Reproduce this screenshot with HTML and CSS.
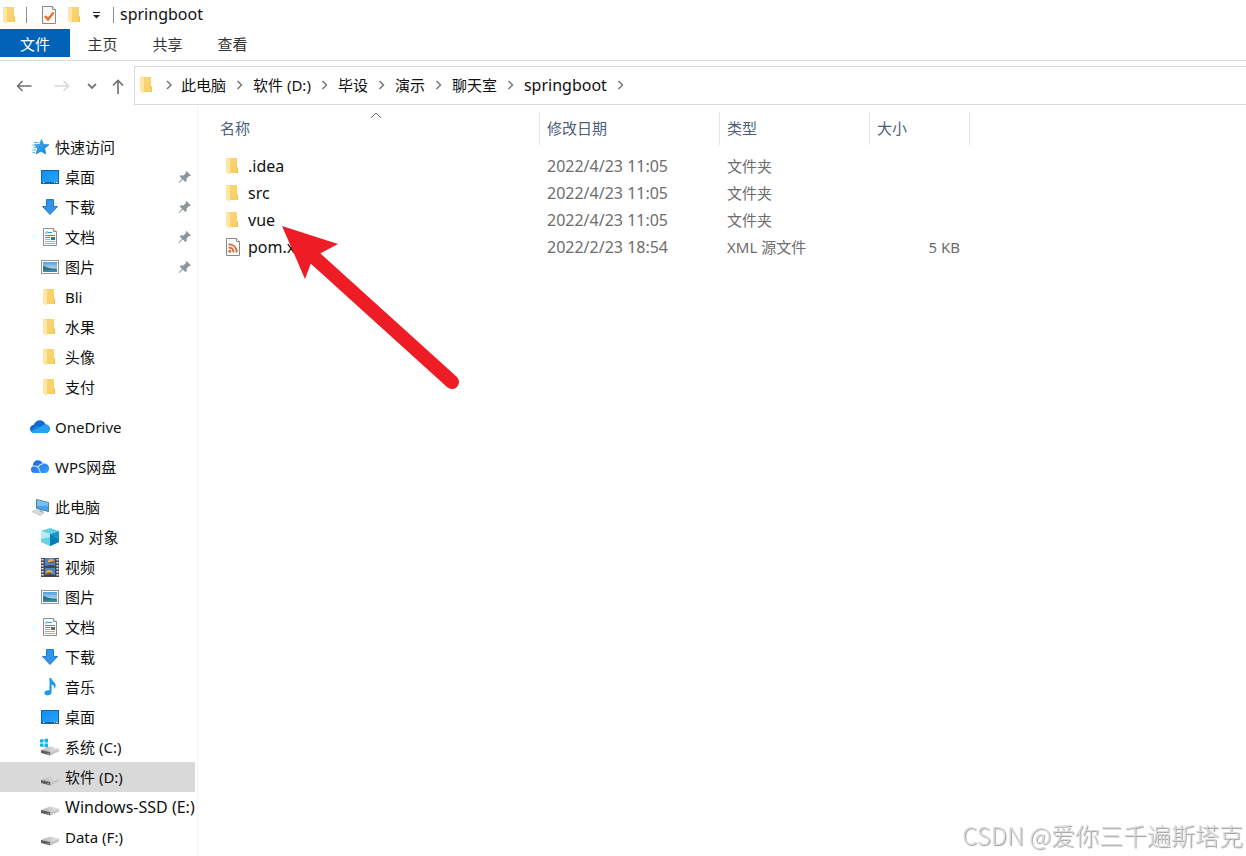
FILE: index.html
```html
<!DOCTYPE html>
<html lang="zh-CN">
<head>
<meta charset="utf-8">
<title>springboot</title>
<link rel="stylesheet" href="styles.css">
</head>
<body>
<svg class="defs" aria-hidden="true">
  <defs>
    <linearGradient id="g-fold" x1="0" y1="0" x2="1" y2="1"><stop offset="0" stop-color="#fbd67c"/><stop offset="1" stop-color="#f9cd62"/></linearGradient>
    <linearGradient id="g-desk" x1="0" y1="0" x2="1" y2="1"><stop offset="0" stop-color="#0f8df0"/><stop offset="1" stop-color="#2aa5ff"/></linearGradient>
    <linearGradient id="g-star" x1="0" y1="0" x2="1" y2="1"><stop offset="0" stop-color="#49b9f5"/><stop offset="1" stop-color="#0c7ed6"/></linearGradient>
    <linearGradient id="g-sky" x1="0" y1="0" x2="0" y2="1"><stop offset="0" stop-color="#4e9fe0"/><stop offset="1" stop-color="#e4f3f8"/></linearGradient>
    <linearGradient id="g-wps" x1="0" y1="0" x2="1" y2="1"><stop offset="0" stop-color="#1563ee"/><stop offset="1" stop-color="#3aa2ff"/></linearGradient>
    <linearGradient id="g-drive" x1="0" y1="0" x2="1" y2="0"><stop offset="0" stop-color="#b4b4b4"/><stop offset="1" stop-color="#e8e8e8"/></linearGradient>
  </defs>
  <symbol id="folder" viewBox="0 0 20 20">
    <path d="M3 2h11v9l1 1v5H6L3 16z" fill="url(#g-fold)"/>
    <path d="M3 2l4 1v14l-1 2-3-3z" fill="#fde6a6"/>
    <path d="M14 11l1 1v5h-1z" fill="#efc050"/>
  </symbol>
  <symbol id="check" viewBox="0 0 20 20">
    <path d="M3.500 1.500h10l3 3v14h-13z" fill="#f7f8fa" stroke="#87898e"/>
    <path d="M13.500 1.500v3h3" fill="#fff" stroke="#87898e"/>
    <path d="M6 11l3 3.500 5.500-7" fill="none" stroke="#f06a24" stroke-width="2.200"/>
  </symbol>
  <symbol id="star" viewBox="0 0 20 20">
    <path d="M11.500 2.500l2.100 5 5.400.2-4.300 3.800 1 5.500-4.700-2.700-5 2.700 1.500-5.500L4.600 7.700l5-.2z" fill="url(#g-star)" stroke="#0e78c4" stroke-width=".6"/>
    <path d="M4 5.500h5M2.500 8h3.500M3.500 10.500h3M2 13h4M2.500 15.500h2.500" stroke="#55b5ee"/>
  </symbol>
  <symbol id="desktop" viewBox="0 0 20 20">
    <rect x="1.500" y="3.500" width="17" height="13" fill="url(#g-desk)" stroke="#0a68b8"/>
    <path d="M2 15.500h16" stroke="#0b63ac"/><path d="M3 15.500h1.500M14 15.500h1M16 15.500h1.500" stroke="#d8efff"/>
  </symbol>
  <symbol id="download" viewBox="0 0 20 20">
    <path d="M6.500 2.500h7v7h4L10 17.500 2.500 9.500h4z" fill="#3393e6" stroke="#2579c6"/>
  </symbol>
  <symbol id="doc" viewBox="0 0 20 20">
    <path d="M3.500 1.500h10l3 3v14h-13z" fill="#fbfcfc" stroke="#8b8f92"/>
    <path d="M13.500 1.500v3h3" fill="#fff" stroke="#8b8f92"/>
    <path d="M8 5.500h4M5 8.500h10M5 10.500h5" stroke="#2c9bd6"/><path d="M5 6.500l2-2v2" fill="none" stroke="#2c9bd6"/>
    <path d="M5 12.500h5M5 14.500h10M5 16.500h10" stroke="#a5b1b8"/>
    <rect x="11" y="10" width="4" height="3" fill="#2e7c9c"/>
  </symbol>
  <symbol id="picture" viewBox="0 0 20 20">
    <rect x="1.500" y="3.500" width="17" height="13" fill="#fff" stroke="#92979b"/>
    <rect x="3" y="5" width="14" height="10" fill="url(#g-sky)"/>
    <path d="M3 9c3 0 4 2 7 2 3 1 5 0 7 1v3H3z" fill="#367478"/><path d="M3 13.500c5-.5 9-1 14-.5v2H3z" fill="#3e84ad"/>
  </symbol>
  <symbol id="onedrive" viewBox="0 0 20 20">
    <path d="M4.500 16C2 16 0 14.300 0 12s1.700-4 3.800-4.200C5 4.800 7.200 3.200 9.700 3.200c2.900 0 5 1.700 5.800 4.200 2.600 0 4.500 2 4.500 4.400S18 16 15.800 16z" fill="#0a6cce"/>
    <path d="M7 8.200l9 5.800-11.500 2C3 16 1.500 15.300.7 14z" fill="#1583df"/>
    <path d="M15.300 7.400c2.700 0 4.700 2 4.700 4.400S18 16 15.800 16H4.500c-1.500 0-2.700-.6-3.500-1.600L11.500 9.300c1-1.200 2.300-1.900 3.800-1.900z" fill="#27a2ee"/>
  </symbol>
  <symbol id="wps" viewBox="0 0 20 20">
    <path d="M4.500 16C2.300 16 1 14.500 1 12.500 1 11 1.700 9.800 3 9.200 2.500 6 4.800 3.300 8 3.300c2.400 0 4.200 1.300 5 3.400 3.300-.7 6.200 1.600 6.200 4.800 0 2.700-2 4.500-4.700 4.500z" fill="url(#g-wps)"/>
    <path d="M3 9.200c3.700-.8 6.600 1.500 7.500 6.800M7.500 10.700c1-2.200 3-3.600 5.500-4" fill="none" stroke="#d4e8ff" stroke-width="1.100"/>
  </symbol>
  <symbol id="pc" viewBox="0 0 20 20">
    <path d="M6.500 2.500l12 3v9l-12-3z" fill="#3ea2ee" stroke="#5e7f99"/>
    <path d="M7 3l11 2.800v3L7 9z" fill="#78c0f4"/>
    <path d="M10 13l3 1v2l-4-1z" fill="#9fa7ad"/><path d="M2 14.500l4-1.500 8 3-4 2.500z" fill="#d8dcdf" stroke="#b1b6ba" stroke-width=".6"/>
  </symbol>
  <symbol id="cube" viewBox="0 0 20 20">
    <path d="M10 1l9 3-9 3-9-3z" fill="#5fd0e7"/><path d="M1 4l9 3v12l-9-4z" fill="#b4eaf3"/><path d="M19 4l-9 3v12l9-4z" fill="#1798c8"/><path d="M1 12l9-2v9l-9-4z" fill="#67d1e2"/><path d="M10 7l9 6v2l-9 4z" fill="#087fb7"/>
  </symbol>
  <symbol id="video" viewBox="0 0 20 20">
    <rect x="1" y="1" width="18" height="19" fill="#44474d"/><path d="M2.500 2v17M17.500 2v17" stroke="#edf0f1" stroke-width="2" stroke-dasharray="1.500 1.500"/>
    <rect x="5" y="1" width="10" height="9" fill="#4e82cf"/><rect x="5" y="11" width="10" height="8" fill="#4e82cf"/>
    <path d="M11 2c2 0 2.500 1 3 3H8c0-2 1-3 3-3zM9 13c2 0 3 1 4 3H6c0-2 1-3 3-3z" fill="#e8b72c"/><path d="M9 5l5-1v2H9zM6 16l5-1v2H6z" fill="#a44c2b"/><path d="M5 9l6-1 4 1v1H5zM5 18l5-1 5 1v1H5z" fill="#304b31"/>
  </symbol>
  <symbol id="music" viewBox="0 0 20 20">
    <path d="M9.500 1h1.800c.3 3 4.300 4 4.300 7.500 0 1.500-.6 2.500-1.300 3.500.2-2.500-.8-4-2.700-4.500V15c0 2-1.700 3.300-3.900 3.300-1.900 0-3.200-.8-3.200-2.300 0-1.900 2.200-3 5-2.600z" fill="#139cec"/>
  </symbol>
  <symbol id="drive" viewBox="0 0 20 20">
    <path d="M1 13l9-3.500 9 2-8.500 3.500z" fill="url(#g-drive)"/><path d="M1 13l9.500 2v3.500L1 16z" fill="#5f5f5f"/><path d="M19 11.500L10.500 15v3.500l8.500-4z" fill="#c7c7c7"/><path d="M7.500 16.500l1.500.4" stroke="#b9c9bc"/>
  </symbol>
  <symbol id="windrive" viewBox="0 0 20 20">
    <use href="#drive"/>
    <path d="M0 2.500l3.500-.5v3.500H0zM4.500 2L8 1.500v4H4.500zM0 6.500h3.500V10L0 9.500zM4.500 6.500H8v4L4.500 10z" fill="#17b0ee"/>
  </symbol>
  <symbol id="pin" viewBox="0 0 14 14">
    <path d="M8.500 1L13 5.500l-1.200.8-.8-.3-2.400 2.500.1 2.500-1.300 1L4.700 9.400 1.300 12.900l-.7-.5L4 8.700 1.700 6.400l1-1.200 2.700.2L8 3l-.3-1z" fill="#8b979d"/>
  </symbol>
  <symbol id="xml" viewBox="0 0 20 20">
    <path d="M3.500 1.500h10l3 3v14h-13z" fill="#f8f9fb" stroke="#84888e"/><path d="M13.500 1.500v3h3" fill="#fff" stroke="#84888e"/>
    <circle cx="6.800" cy="14.300" r="1.500" fill="#d4763a"/><path d="M5.500 10.500c3 0 5 2 5 5M5.500 7.200c5 0 8.300 3.300 8.300 8.300" fill="none" stroke="#d4763a" stroke-width="2"/>
  </symbol>
  <symbol id="sep" viewBox="0 0 8 10"><path d="M2 1l4 4-4 4" fill="none" stroke="#777" stroke-width="1.500"/></symbol>
</svg>

<header class="titlebar">
  <svg class="icon"><use href="#folder"/></svg>
  <span class="rule"></span>
  <button class="quick first" aria-label="属性"><svg class="icon"><use href="#check"/></svg></button>
  <button class="quick" aria-label="新建文件夹"><svg class="icon"><use href="#folder"/></svg></button>
  <button class="quick" aria-label="自定义快速访问工具栏"><svg class="more" viewBox="0 0 11 8"><path d="M2 1.500h7" stroke="#222"/><path d="M2 4h7L5.500 7.500z" fill="#222"/></svg></button>
  <span class="rule last"></span>
  <h1 class="title">springboot</h1>
</header>

<nav class="tabs">
  <button class="tab file">文件</button>
  <button class="tab">主页</button>
  <button class="tab">共享</button>
  <button class="tab">查看</button>
</nav>

<div class="location">
  <div class="history">
    <button aria-label="后退"><svg width="16" height="14" viewBox="0 0 16 14"><path d="M15.500 7H1.500M6.500 2L1.500 7l5 5" fill="none" stroke="#6f6f6f" stroke-width="1.500"/></svg></button>
    <button aria-label="前进" disabled><svg width="16" height="14" viewBox="0 0 16 14"><path d="M.5 7h14M9.500 2l5 5-5 5" fill="none" stroke="#d8d8d8" stroke-width="1.500"/></svg></button>
    <button class="recent" aria-label="最近浏览的位置"><svg width="10" height="8" viewBox="0 0 10 8"><path d="M1 2l4 4 4-4" fill="none" stroke="#777" stroke-width="1.800"/></svg></button>
    <button class="up" aria-label="上移"><svg width="14" height="16" viewBox="0 0 14 16"><path d="M7 16V2.500M2 7.500l5-5 5 5" fill="none" stroke="#6f6f6f" stroke-width="1.600"/></svg></button>
  </div>
  <nav class="crumbs">
    <svg class="icon"><use href="#folder"/></svg>
    <svg class="sep"><use href="#sep"/></svg><a href="#">此电脑</a>
    <svg class="sep"><use href="#sep"/></svg><a href="#">软件 (D:)</a>
    <svg class="sep"><use href="#sep"/></svg><a href="#">毕设</a>
    <svg class="sep"><use href="#sep"/></svg><a href="#">演示</a>
    <svg class="sep"><use href="#sep"/></svg><a href="#">聊天室</a>
    <svg class="sep"><use href="#sep"/></svg><a class="latin" href="#">springboot</a>
    <svg class="sep"><use href="#sep"/></svg>
  </nav>
</div>

<div class="body">
  <nav class="sidebar">
    <div class="group">
      <a class="node root" href="#"><svg class="icon"><use href="#star"/></svg>快速访问</a>
      <a class="node" href="#"><svg class="icon"><use href="#desktop"/></svg>桌面<svg class="pin"><use href="#pin"/></svg></a>
      <a class="node" href="#"><svg class="icon"><use href="#download"/></svg>下载<svg class="pin"><use href="#pin"/></svg></a>
      <a class="node" href="#"><svg class="icon"><use href="#doc"/></svg>文档<svg class="pin"><use href="#pin"/></svg></a>
      <a class="node" href="#"><svg class="icon"><use href="#picture"/></svg>图片<svg class="pin"><use href="#pin"/></svg></a>
      <a class="node" href="#"><svg class="icon"><use href="#folder"/></svg>Bli</a>
      <a class="node" href="#"><svg class="icon"><use href="#folder"/></svg>水果</a>
      <a class="node" href="#"><svg class="icon"><use href="#folder"/></svg>头像</a>
      <a class="node" href="#"><svg class="icon"><use href="#folder"/></svg>支付</a>
    </div>
    <div class="group"><a class="node root" href="#"><svg class="icon"><use href="#onedrive"/></svg>OneDrive</a></div>
    <div class="group"><a class="node root" href="#"><svg class="icon"><use href="#wps"/></svg>WPS网盘</a></div>
    <div class="group">
      <a class="node root" href="#"><svg class="icon"><use href="#pc"/></svg>此电脑</a>
      <a class="node" href="#"><svg class="icon"><use href="#cube"/></svg>3D 对象</a>
      <a class="node" href="#"><svg class="icon"><use href="#video"/></svg>视频</a>
      <a class="node" href="#"><svg class="icon"><use href="#picture"/></svg>图片</a>
      <a class="node" href="#"><svg class="icon"><use href="#doc"/></svg>文档</a>
      <a class="node" href="#"><svg class="icon"><use href="#download"/></svg>下载</a>
      <a class="node" href="#"><svg class="icon"><use href="#music"/></svg>音乐</a>
      <a class="node" href="#"><svg class="icon"><use href="#desktop"/></svg>桌面</a>
      <a class="node" href="#"><svg class="icon"><use href="#windrive"/></svg>系统 (C:)</a>
      <a class="node selected" href="#"><svg class="icon"><use href="#drive"/></svg>软件 (D:)</a>
      <a class="node latin" href="#"><svg class="icon"><use href="#drive"/></svg>Windows-SSD (E:)</a>
      <a class="node" href="#"><svg class="icon"><use href="#drive"/></svg>Data (F:)</a>
    </div>
  </nav>

  <main class="content">
    <table class="files">
      <colgroup><col class="c-name"><col class="c-date"><col class="c-type"><col class="c-size"></colgroup>
      <thead>
        <tr>
          <th><div class="head">名称<svg class="sort" viewBox="0 0 12 7"><path d="M1 6l5-5 5 5" fill="none" stroke="#666"/></svg></div></th>
          <th><div class="head">修改日期</div></th>
          <th><div class="head">类型</div></th>
          <th><div class="head">大小</div></th>
        </tr>
      </thead>
      <tbody>
        <tr><td><div class="name latin"><svg class="icon"><use href="#folder"/></svg>.idea</div></td><td class="latin">2022/4/23 11:05</td><td>文件夹</td><td></td></tr>
        <tr><td><div class="name latin"><svg class="icon"><use href="#folder"/></svg>src</div></td><td class="latin">2022/4/23 11:05</td><td>文件夹</td><td></td></tr>
        <tr><td><div class="name latin"><svg class="icon"><use href="#folder"/></svg>vue</div></td><td class="latin">2022/4/23 11:05</td><td>文件夹</td><td></td></tr>
        <tr><td><div class="name latin"><svg class="icon"><use href="#xml"/></svg>pom.xml</div></td><td class="latin">2022/2/23 18:54</td><td>XML 源文件</td><td class="size">5 KB</td></tr>
      </tbody>
    </table>
    <svg class="pointer" viewBox="0 0 180 166" aria-hidden="true">
      <path d="M33 32L170 156" stroke="#ee1c25" stroke-width="14" stroke-linecap="round"/>
      <path d="M0 0l56 18-17 9-10 10-6 16z" fill="#ee1c25"/>
    </svg>
  </main>
</div>
<div class="watermark">CSDN @爱你三千遍斯塔克</div>
</body>
</html>
```
FILE: styles.css
```css
* { box-sizing: border-box; }

body {
  margin: 0;
  min-height: 100vh;
  display: flex;
  flex-direction: column;
  background: #fff;
  color: #111;
  font: 15px/20px "Noto Sans", "Noto Sans CJK SC", sans-serif;
}

button {
  border: 0;
  padding: 0;
  background: none;
  color: inherit;
  font: inherit;
}

a { color: inherit; text-decoration: none; }

/* Labels set wholly in Latin letters or digits */
.latin { font-size: 16px; }

.defs { position: absolute; width: 0; height: 0; }

.icon { display: block; flex: none; width: 20px; height: 20px; }

/* Title bar */
.titlebar { display: flex; align-items: center; gap: 6px; height: 29px; }
.rule { width: 1px; height: 16px; background: #8c8c8c; }
.rule.last { margin-left: 5px; }
.quick.first { margin-left: 6px; }
.more { display: block; width: 11px; height: 8px; }
.title { margin: 0; padding-bottom: 2px; font-size: 16px; font-weight: 400; }

/* Ribbon tabs */
.tabs { display: flex; height: 32px; border-bottom: 1px solid #dadbdc; }
.tab { width: 65px; height: 28px; padding-top: 2px; color: #333; }
.tab.file { width: 70px; background: #0063b8; color: #fff; }

/* Address row */
.location { display: flex; height: 44px; padding-top: 5px; }
.history { flex: none; display: flex; align-items: center; width: 134px; padding-left: 16px; gap: 22px; }
.history button { display: flex; }
.history .recent { margin-left: -5px; }
.history .up { margin-left: -8px; }
.crumbs {
  flex: 1;
  display: flex;
  align-items: center;
  padding: 0 0 2px 2px;
  border: 1px solid #d9d9d9;
  border-right: 0;
  white-space: nowrap;
}
.sep { flex: none; width: 27px; height: 10px; }
.icon + .sep { width: 24px; }

/* Navigation pane */
.body { flex: 1; display: flex; }
.sidebar { flex: none; width: 198px; padding: 27px 2px 0 0; border-right: 1px solid #f5f5f5; }
.group + .group { margin-top: 10px; }
.node {
  display: flex;
  align-items: center;
  gap: 5px;
  height: 30px;
  padding: 0 3px 0 40px;
  white-space: nowrap;
}
.node.root { padding-left: 30px; }
.node.selected { background: #d9d9d9; }
.pin { width: 14px; height: 14px; margin-left: auto; }

/* File list */
.content { position: relative; flex: 1; padding: 7px 0 0 15px; }
.files { width: 757px; table-layout: fixed; border-collapse: collapse; color: #6d6d6d; }
.c-name { width: 327px; }
.c-date { width: 180px; }
.c-type { width: 150px; }
.c-size { width: 100px; }
.files th { height: 40px; padding: 0; vertical-align: top; text-align: left; font-weight: 400; color: #4c607a; }
.head { position: relative; height: 33px; padding-left: 7px; border-right: 1px solid #e5e5e5; line-height: 33px; }
.sort { position: absolute; top: 0; left: calc(50% - 6px); width: 12px; height: 7px; }
.files td { height: 27px; padding: 0 10px 0 7px; }
.files td:first-child { padding-left: 10px; }
.name { display: flex; align-items: center; gap: 5px; color: #111; }
.files .size { text-align: right; }

/* Annotation arrow lying over the list */
.pointer { position: absolute; left: 84px; top: 121px; width: 180px; height: 166px; }

.watermark {
  position: fixed;
  right: 3px;
  bottom: 4px;
  color: #dadada;
  font: 300 24px/34px "Noto Sans CJK SC", sans-serif;
  text-shadow: 1px 1px 1px #999;
}
```
